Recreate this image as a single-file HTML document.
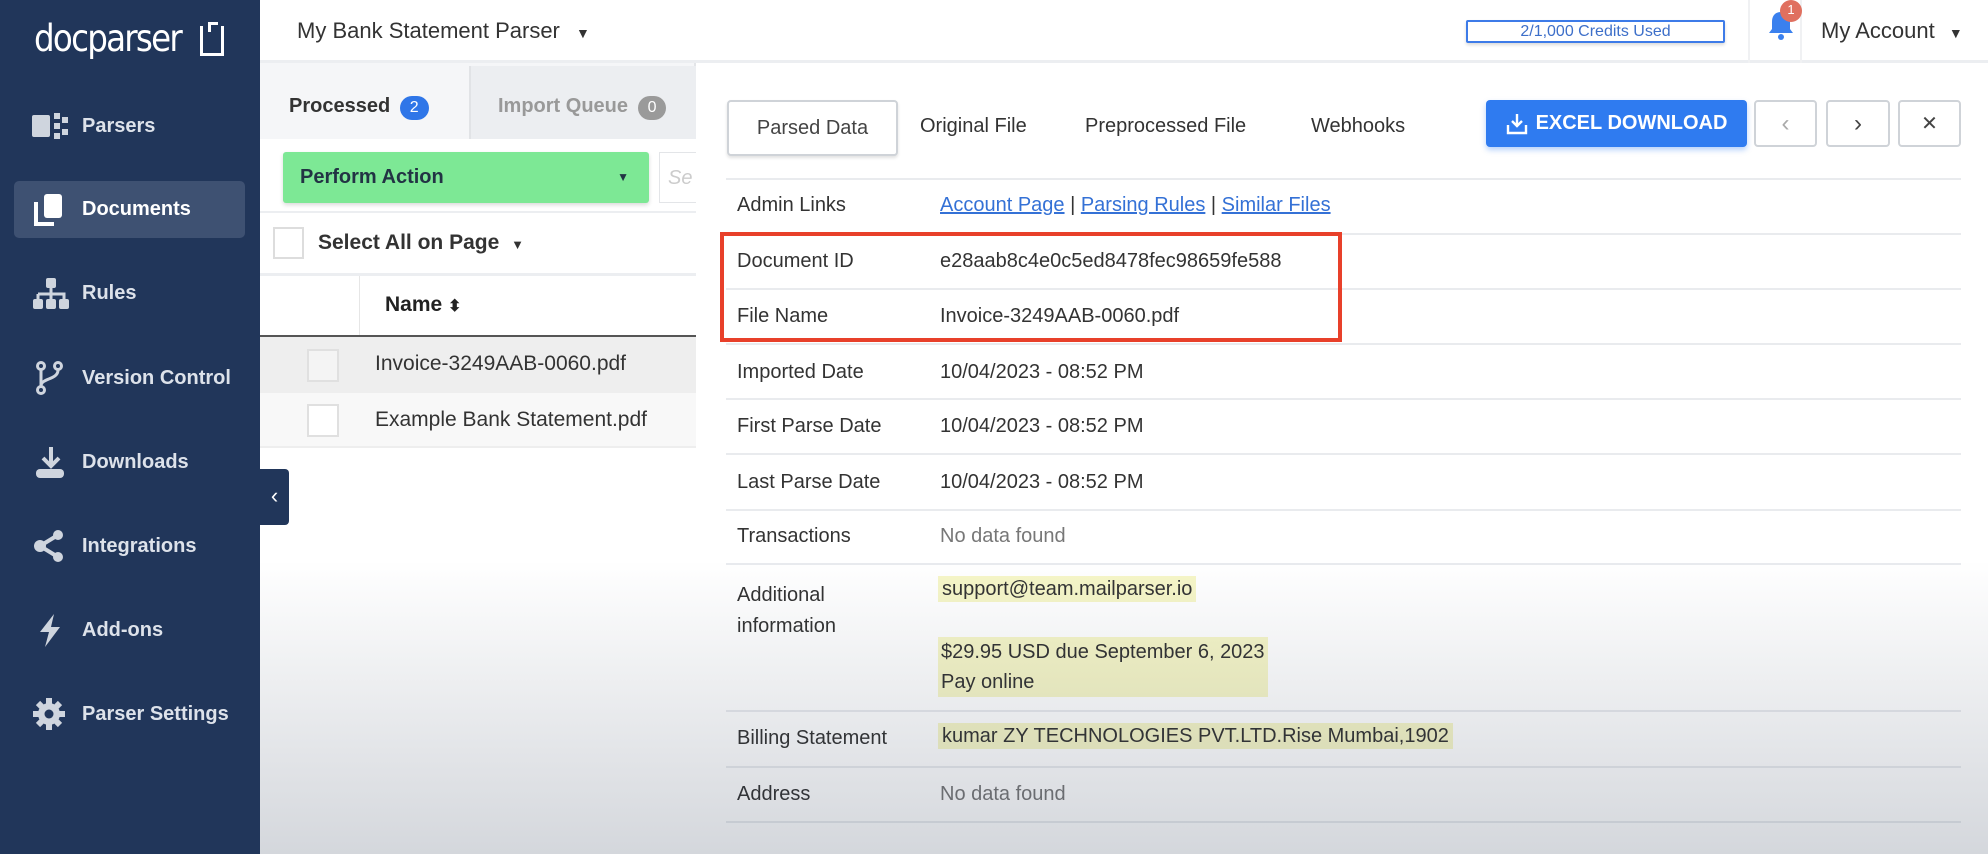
<!DOCTYPE html>
<html><head><meta charset="utf-8"><style>
*{box-sizing:border-box;margin:0;padding:0}
body{width:1988px;height:854px;overflow:hidden;font-family:"Liberation Sans",sans-serif;background:#fff;position:relative;color:#333}
.abs{position:absolute}
#side{left:0;top:0;width:260px;height:854px;background:#21365a;z-index:5}
.nav{position:absolute;left:32px;height:40px;display:flex;align-items:center;color:#dde2ea;font-weight:bold;font-size:20px}
.nav svg{width:38px;height:34px;margin-right:12px;fill:#cfd5de}
#top{left:260px;top:0;width:1728px;height:63px;background:#fff;border-bottom:3px solid #eceef1}
#mid{left:260px;top:63px;width:436px;height:791px;background:#f5f6f8;border-right:2px solid #e3e5e8}
#right{left:696px;top:63px;width:1292px;height:791px;background:#fff}
.row{position:absolute;left:726px;width:1235px;border-top:2px solid #e9ebee}
.lbl{position:absolute;left:737px;font-size:20px;color:#333}
.val{position:absolute;left:940px;font-size:20px;color:#333}
.hl{background:#f6f6c8;padding:2px 4px}
.btn{position:absolute;top:100px;height:47px;border:2px solid #cfd3d8;border-radius:4px;background:#fff;display:flex;align-items:center;justify-content:center;font-size:24px;color:#444}
</style></head><body>
<div id="side" class="abs">
 <div class="abs" style="left:34px;top:17px;color:#fff;font-size:37px;font-family:'DejaVu Sans',sans-serif;letter-spacing:-2px;transform:scaleX(0.88);transform-origin:left">docparser</div>
 <div class="abs" style="left:200px;top:26px;width:24px;height:30px;border:3px solid #fff;border-top:none"></div>
 <div class="abs" style="left:208px;top:22px;width:10px;height:10px;border-left:3px solid #fff;border-top:3px solid #fff"></div>
 <div class="abs" style="left:14px;top:181px;width:231px;height:57px;background:#3e5172;border-radius:5px"></div>
 <div class="nav" style="top:106px"><svg viewBox="0 0 38 30"><rect x="0" y="4" width="18" height="22" rx="2"/><rect x="22" y="2" width="6" height="6"/><rect x="22" y="12" width="6" height="6"/><rect x="22" y="22" width="6" height="6"/><rect x="30" y="6" width="6" height="6"/><rect x="30" y="18" width="6" height="6"/></svg>Parsers</div>
 <div class="nav" style="top:189px;color:#fff"><svg viewBox="0 0 38 34"><rect x="12" y="2" width="18" height="24" rx="3" fill="#fff"/><path d="M4 10v22h18" stroke="#fff" stroke-width="4" fill="none"/></svg>Documents</div>
 <div class="nav" style="top:273px"><svg viewBox="0 0 38 34"><rect x="14" y="2" width="10" height="10" rx="2"/><path d="M19 12v6M6 18h26v6M6 18v6M19 18v6" stroke="#cfd5de" stroke-width="3" fill="none"/><rect x="1" y="23" width="10" height="10" rx="2"/><rect x="14" y="23" width="10" height="10" rx="2"/><rect x="27" y="23" width="10" height="10" rx="2"/></svg>Rules</div>
 <div class="nav" style="top:358px"><svg viewBox="0 0 38 34"><circle cx="9" cy="5" r="3.5" fill="none" stroke="#cfd5de" stroke-width="3"/><circle cx="9" cy="29" r="3.5" fill="none" stroke="#cfd5de" stroke-width="3"/><circle cx="26" cy="5" r="3.5" fill="none" stroke="#cfd5de" stroke-width="3"/><path d="M9 9v16M26 9c0 10-17 8-17 16" stroke="#cfd5de" stroke-width="3" fill="none"/></svg>Version Control</div>
 <div class="nav" style="top:442px"><svg viewBox="0 0 38 34"><path d="M19 2v18M11 13l8 8 8-8" stroke="#cfd5de" stroke-width="4" fill="none"/><rect x="4" y="24" width="28" height="9" rx="4"/></svg>Downloads</div>
 <div class="nav" style="top:526px"><svg viewBox="0 0 38 34"><circle cx="26" cy="6" r="5"/><circle cx="8" cy="17" r="6"/><circle cx="26" cy="28" r="5"/><path d="M26 6L8 17l18 11" stroke="#cfd5de" stroke-width="4" fill="none"/></svg>Integrations</div>
 <div class="nav" style="top:610px"><svg viewBox="0 0 38 34"><path d="M22 1L8 19h9l-4 15 15-20h-9z"/></svg>Add-ons</div>
 <div class="nav" style="top:694px"><svg viewBox="0 0 38 34"><circle cx="17" cy="17" r="11"/><path d="M17 1v32M1 17h32M6 6l22 22M28 6L6 28" stroke="#cfd5de" stroke-width="6"/><circle cx="17" cy="17" r="4.5" fill="#21365a"/></svg>Parser Settings</div>
</div>
<div id="top" class="abs">
 <div class="abs" style="left:37px;top:18px;font-size:22px;color:#333">My Bank Statement Parser <span style="font-size:14px;margin-left:10px">▼</span></div>
 <div class="abs" style="left:1206px;top:20px;width:259px;height:23px;border:2px solid #3d7be8;border-radius:2px;font-size:16px;color:#3d6fc9;text-align:center;line-height:19px;box-shadow:0 2px 3px rgba(0,0,0,.15)">2/1,000 Credits Used</div>
 <div class="abs" style="left:1488px;top:0;width:2px;height:63px;background:#f0f1f3"></div>
 <div class="abs" style="left:1540px;top:0;width:2px;height:63px;background:#f0f1f3"></div>
 <svg class="abs" style="left:1508px;top:10px" width="26" height="30" viewBox="0 0 26 30"><path d="M13 2c-6 0-9 4-9 10v7l-3 4h24l-3-4v-7c0-6-3-10-9-10z" fill="#3a80ee"/><circle cx="13" cy="27" r="3" fill="#3a80ee"/></svg>
 <div class="abs" style="left:1520px;top:0;width:22px;height:22px;border-radius:50%;background:#e0705f;color:#fff;font-size:13px;text-align:center;line-height:20px">1</div>
 <div class="abs" style="left:1561px;top:18px;font-size:22px;color:#333">My Account <span style="font-size:14px;margin-left:8px">▼</span></div>
</div>
<div id="mid" class="abs">
 <div class="abs" style="left:209px;top:3px;width:227px;height:73px;background:#eceef1;border-left:2px solid #e1e3e6"></div>
 <div class="abs" style="left:29px;top:32px;font-size:20px;font-weight:bold;color:#333">Processed <span style="display:inline-block;background:#2f76e8;color:#fff;border-radius:14px;font-weight:normal;font-size:16px;padding:3px 10px;margin-left:4px">2</span></div>
 <div class="abs" style="left:238px;top:32px;font-size:20px;font-weight:bold;color:#999">Import Queue <span style="display:inline-block;background:#9a9a9a;color:#fff;border-radius:14px;font-weight:normal;font-size:16px;padding:3px 10px;margin-left:4px">0</span></div>
 <div class="abs" style="left:0;top:76px;width:436px;height:715px;background:#fff"></div>
 <div class="abs" style="left:23px;top:89px;width:366px;height:51px;background:#7de895;border-radius:3px;box-shadow:0 2px 4px rgba(0,0,0,.15);font-size:20px;font-weight:bold;color:#234;padding:14px 17px">Perform Action<span style="position:absolute;right:20px;top:18px;font-size:12px">▼</span></div>
 <div class="abs" style="left:399px;top:89px;width:40px;height:51px;border:1px solid #e3e5e8;border-right:none;font-style:italic;color:#ccc;font-size:20px;padding:14px 8px">Se</div>
 <div class="abs" style="left:0;top:148px;width:436px;height:2px;background:#eceef1"></div>
 <div class="abs" style="left:13px;top:164px;width:31px;height:32px;border:2px solid #ddd;background:#fff"></div>
 <div class="abs" style="left:58px;top:168px;font-size:21px;font-weight:bold;color:#333">Select All on Page <span style="font-size:13px;margin-left:6px">▼</span></div>
 <div class="abs" style="left:0;top:210px;width:436px;height:3px;background:#eceef1"></div>
 <div class="abs" style="left:99px;top:213px;width:1px;height:172px;background:#e6e6e6"></div>
 <div class="abs" style="left:125px;top:230px;font-size:21px;font-weight:bold;color:#222">Name <span style="font-size:16px">⬍</span></div>
 <div class="abs" style="left:0;top:272px;width:436px;height:2px;background:#555"></div>
 <div class="abs" style="left:0;top:274px;width:436px;height:56px;background:#eeeeee"></div>
 <div class="abs" style="left:47px;top:286px;width:32px;height:33px;border:2px solid #e0e0e0;background:#f4f4f4"></div>
 <div class="abs" style="left:115px;top:289px;font-size:21px;color:#333">Invoice-3249AAB-0060.pdf</div>
 <div class="abs" style="left:0;top:330px;width:436px;height:55px;background:#f8f8f8;border-bottom:2px solid #eee"></div>
 <div class="abs" style="left:47px;top:341px;width:32px;height:33px;border:2px solid #e0e0e0;background:#fff"></div>
 <div class="abs" style="left:115px;top:345px;font-size:21px;color:#333">Example Bank Statement.pdf</div>
 <div class="abs" style="left:0;top:406px;width:29px;height:56px;background:#21365a;border-radius:0 4px 4px 0;color:#fff;font-size:22px;text-align:center;line-height:54px">‹</div>
</div>
<div id="right" class="abs"></div>
<div class="btn" style="left:727px;width:171px;height:56px;font-size:20px;box-shadow:0 2px 3px rgba(0,0,0,.12)">Parsed Data</div>
<div class="abs" style="left:920px;top:115px;font-size:20px">Original File</div>
<div class="abs" style="left:1085px;top:115px;font-size:20px">Preprocessed File</div>
<div class="abs" style="left:1311px;top:115px;font-size:20px">Webhooks</div>
<div class="abs" style="left:1486px;top:100px;width:261px;height:47px;background:#2f7bf0;border-radius:4px;box-shadow:0 3px 6px rgba(47,123,240,.35);color:#fff;font-weight:bold;font-size:20px;display:flex;align-items:center;justify-content:center"><svg width="22" height="22" viewBox="0 0 22 22" style="margin-right:8px"><path d="M11 1v12M6 8l5 5 5-5M2 12v8h18v-8" stroke="#fff" stroke-width="2.4" fill="none"/></svg>EXCEL DOWNLOAD</div>
<div class="btn" style="left:1754px;width:63px;color:#aaa">‹</div>
<div class="btn" style="left:1826px;width:64px">›</div>
<div class="btn" style="left:1898px;width:63px;font-size:20px">✕</div>
<div class="row" style="top:178px"></div>
<div class="row" style="top:233px"></div>
<div class="row" style="top:288px"></div>
<div class="row" style="top:343px"></div>
<div class="row" style="top:398px"></div>
<div class="row" style="top:453px"></div>
<div class="row" style="top:509px"></div>
<div class="row" style="top:563px"></div>
<div class="row" style="top:710px"></div>
<div class="row" style="top:766px"></div>
<div class="row" style="top:821px"></div>
<div class="lbl" style="top:194px">Admin Links</div>
<div class="val" style="top:194px;color:#333"><u style="color:#3471d6">Account Page</u> | <u style="color:#3471d6">Parsing Rules</u> | <u style="color:#3471d6">Similar Files</u></div>
<div class="lbl" style="top:250px">Document ID</div><div class="val" style="top:250px">e28aab8c4e0c5ed8478fec98659fe588</div>
<div class="lbl" style="top:305px">File Name</div><div class="val" style="top:305px">Invoice-3249AAB-0060.pdf</div>
<div class="abs" style="left:720px;top:232px;width:622px;height:110px;border:4px solid #e8402a"></div>
<div class="lbl" style="top:361px">Imported Date</div><div class="val" style="top:361px">10/04/2023 - 08:52 PM</div>
<div class="lbl" style="top:415px">First Parse Date</div><div class="val" style="top:415px">10/04/2023 - 08:52 PM</div>
<div class="lbl" style="top:471px">Last Parse Date</div><div class="val" style="top:471px">10/04/2023 - 08:52 PM</div>
<div class="lbl" style="top:525px">Transactions</div><div class="val" style="top:525px;color:#777">No data found</div>
<div class="lbl" style="top:580px;line-height:31px">Additional<br>information</div>
<div class="val" style="top:578px;left:938px"><span class="hl">support@team.mailparser.io</span></div>
<div class="val" style="top:637px;left:938px;line-height:30px;background:#f6f6c8;padding:0 3px">$29.95 USD due September 6, 2023<br>Pay online</div>
<div class="lbl" style="top:727px">Billing Statement</div><div class="val" style="top:725px;left:938px"><span class="hl">kumar ZY TECHNOLOGIES PVT.LTD.Rise Mumbai,1902</span></div>
<div class="lbl" style="top:783px">Address</div><div class="val" style="top:783px;color:#777">No data found</div>
<div class="abs" style="left:260px;top:560px;width:1728px;height:294px;background:linear-gradient(rgba(40,55,80,0),rgba(40,55,80,.2));pointer-events:none"></div>
</body></html>
